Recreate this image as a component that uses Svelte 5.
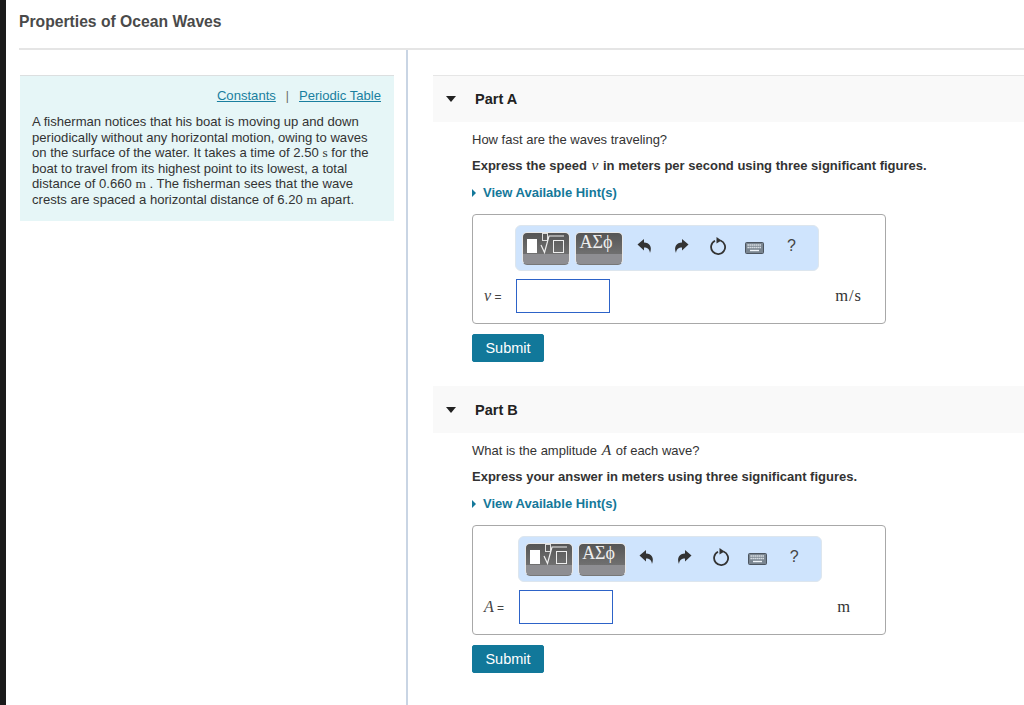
<script>
	const parts = [
		{
			name: 'Part A',
			question: ['How fast are the waves traveling?', '', ''],
			instruction: ['Express the speed ', 'v', ' in meters per second using three significant figures.'],
			label: 'v',
			unit: 'm/s',
			unitInset: 23
		},
		{
			name: 'Part B',
			question: ['What is the amplitude ', 'A', ' of each wave?'],
			instruction: ['Express your answer in meters using three significant figures.', '', ''],
			label: 'A',
			unit: 'm',
			unitInset: 34
		}
	];
</script>

{#snippet mathText(bits)}
	{bits[0]}{#if bits[1]}<i class="math">{bits[1]}</i>{/if}{bits[2]}
{/snippet}

<div class="page">
	<h1>Properties of Ocean Waves</h1>

	<div class="columns">
		<aside>
			<div class="intro">
				<div class="links">
					<a href="#constants">Constants</a>
					<span class="sep">|</span>
					<a href="#table">Periodic Table</a>
				</div>
				<p>
					A fisherman notices that his boat is moving up and down periodically without any
					horizontal motion, owing to waves on the surface of the water. It takes a time of 2.50
					<span class="unit">s</span> for the boat to travel from its highest point to its lowest,
					a total distance of 0.660 <span class="unit">m</span> . The fisherman sees that the wave
					crests are spaced a horizontal distance of 6.20 <span class="unit">m</span> apart.
				</p>
			</div>
		</aside>

		<main>
			{#each parts as part}
				<section>
					<header>
						<span class="caret"></span>
						<h2>{part.name}</h2>
					</header>
					<div class="content">
						<p class="question">{@render mathText(part.question)}</p>
						<p class="instruction">{@render mathText(part.instruction)}</p>
						<a class="hints" href="#hints"><span class="hint-caret"></span>View Available Hint(s)</a>

						<div class="answer">
							<div class="toolbar">
								<button class="tpl" aria-label="Templates">
									<svg width="46" height="31" viewBox="0 0 46 31">
										<rect x="4" y="6" width="10" height="14" fill="#fff" />
										<rect x="19.5" y="0.5" width="5" height="7" fill="none" stroke="#ddd" />
										<path d="M18 12 L21.5 19.5 L26 3 H41" fill="none" stroke="#eee" stroke-width="1.2" />
										<rect x="30.5" y="7.5" width="10" height="12" fill="none" stroke="#eee" />
									</svg>
								</button>
								<button class="tpl greek">ΑΣϕ</button>
								<div class="tools">
									<svg width="16" height="16" viewBox="0 0 16 16">
										<path d="M0.5 6.5 L7 1 V4.5 C12.5 4.5 15.5 9 13 15 C12.5 11 10.5 9.5 7 9.5 V12.5 Z" fill="#333" />
									</svg>
									<svg width="16" height="16" viewBox="0 0 16 16">
										<path d="M15.5 6.5 L9 1 V4.5 C3.5 4.5 0.5 9 3 15 C3.5 11 5.5 9.5 9 9.5 V12.5 Z" fill="#333" />
									</svg>
									<svg width="18" height="18" viewBox="0 0 18 18">
										<path d="M6 3.8 A7 7 0 1 0 11.5 3.5" fill="none" stroke="#333" stroke-width="1.8" />
										<path d="M7.5 0 L12.5 3.6 L7.5 6.5 Z" fill="#333" />
									</svg>
									<svg class="keys" width="19" height="12" viewBox="0 0 19 12">
										<rect x="0.5" y="0.5" width="18" height="11" rx="1" fill="#7a8590" stroke="#4c5560" />
										<path d="M2.5 3 H16.5 M2.5 5.5 H16.5" stroke="#eef3f8" stroke-width="1.5" stroke-dasharray="1.3 .7" />
										<path d="M5 8.5 H14" stroke="#eef3f8" stroke-width="1.4" />
									</svg>
									<span class="help">?</span>
								</div>
							</div>
							<label class="var" for={part.label}><i class="math">{part.label}</i> =</label>
							<input id={part.label} type="text" />
							<span class="answer-unit" style:padding-right="{part.unitInset}px">{part.unit}</span>
						</div>

						<button class="submit">Submit</button>
					</div>
				</section>
			{/each}
		</main>
	</div>
</div>

<style>
	:global(body) {
		margin: 0;
		background: #fff;
		font-family: 'Liberation Sans', Arial, sans-serif;
	}

	.page {
		height: 705px;
		box-sizing: border-box;
		overflow: hidden;
		border-left: 6px solid #1a1a1a;
		padding-left: 13px;
		display: flex;
		flex-direction: column;
		color: #333;
	}

	h1 {
		margin: 0;
		height: 50px;
		box-sizing: border-box;
		padding-top: 12px;
		border-bottom: 2px solid #e5e5e5;
		font-size: 15.7px;
		line-height: 19px;
		color: #4a4a4a;
	}

	.columns {
		flex: 1;
		display: flex;
	}

	aside {
		width: 389px;
		box-sizing: border-box;
		border-right: 2px solid #c9d5e4;
		padding: 25px 12px 0 1px;
	}

	.intro {
		background: #e6f6f7;
		border-top: 1px solid #dcdfe0;
		height: 146px;
		box-sizing: border-box;
		padding: 12px 13px 0 12px;
	}

	.links {
		display: flex;
		justify-content: flex-end;
		gap: 10px;
		font-size: 13.1px;
		line-height: 16px;
		margin-bottom: 10px;
	}

	.links a {
		color: #1a7f9f;
	}

	.sep {
		color: #666;
		font-size: 12px;
	}

	.intro p {
		margin: 0;
		font-size: 13.1px;
		line-height: 15.6px;
		color: #333;
	}

	.unit {
		font-family: 'Liberation Serif', serif;
		font-size: 13.5px;
		line-height: 1;
	}

	main {
		flex: 1;
		padding: 25px 0 0 25px;
	}

	section {
		height: 311px;
	}

	header {
		height: 47px;
		box-sizing: border-box;
		display: flex;
		align-items: center;
		background: #f9f9f9;
		border-top: 1px solid #e6e6e6;
	}

	section + section header {
		border-top-color: #f9f9f9;
	}

	.caret {
		width: 0;
		height: 0;
		margin-left: 13px;
		border-left: 5.5px solid transparent;
		border-right: 5.5px solid transparent;
		border-top: 6px solid #222;
	}

	h2 {
		margin: 0 0 0 19px;
		font-size: 14.5px;
		color: #222;
	}

	.content {
		padding: 9px 0 0 39px;
		font-size: 13px;
	}

	.question {
		margin: 0;
		line-height: 17px;
	}

	.instruction {
		margin: 9px 0 0;
		line-height: 17px;
		font-weight: bold;
	}

	.math {
		font-family: 'Liberation Serif', serif;
		font-style: italic;
		font-size: 15.5px;
		font-weight: normal;
		line-height: 1;
		padding: 0 1px;
	}

	.hints {
		display: flex;
		align-items: center;
		gap: 7px;
		margin-top: 11px;
		line-height: 16px;
		font-weight: bold;
		color: #14789a;
		text-decoration: none;
	}

	.hint-caret {
		width: 0;
		height: 0;
		border-top: 4px solid transparent;
		border-bottom: 4px solid transparent;
		border-left: 4px solid #14789a;
	}

	.answer {
		margin-top: 13px;
		width: 414px;
		height: 110px;
		box-sizing: border-box;
		border: 1px solid #a8a8a8;
		border-radius: 4px;
		padding: 10px 0 0 11px;
		display: grid;
		grid-template-columns: auto 1fr auto;
		grid-template-rows: 46px 34px;
		align-content: start;
		row-gap: 8px;
		align-items: center;
		column-gap: 15px;
	}

	.toolbar {
		grid-column: 2 / 4;
		width: 304px;
		height: 46px;
		box-sizing: border-box;
		margin-left: -1px;
		background: #cfe4fd;
		border: 1px solid #dde6ee;
		border-radius: 6px;
		display: flex;
		align-items: center;
		padding: 0 0 0 6px;
		gap: 5px;
	}

	.tpl {
		flex: none;
		width: 48px;
		height: 33px;
		box-sizing: border-box;
		padding: 0;
		border: 1px solid #e8e8e8;
		border-bottom-color: #777;
		border-radius: 5px;
		background: linear-gradient(#555 0, #707070 68%, #8e8e92 68%, #8e8e92 100%);
		display: block;
		line-height: 0;
		text-align: left;
	}

	.greek {
		color: #eee;
		font-family: 'Liberation Serif', serif;
		font-size: 18px;
		line-height: 18px;
		padding: 0 0 13px 3px;
		white-space: nowrap;
	}

	.tools {
		display: grid;
		grid-auto-flow: column;
		grid-auto-columns: 36.7px;
		justify-items: center;
		align-items: center;
		margin-left: -2px;
		margin-top: -5px;
	}

	.keys {
		margin-top: 5px;
	}

	.help {
		font-size: 16px;
		color: #444;
	}

	.var {
		font-size: 12px;
		color: #444;
		white-space: nowrap;
	}

	.var .math {
		font-size: 16px;
		padding: 0;
	}

	input {
		width: 94px;
		height: 34px;
		box-sizing: border-box;
		border: 1px solid #2d63c8;
		background: #fff;
		outline: none;
		padding: 0;
	}

	.answer-unit {
		font-family: 'Liberation Serif', serif;
		font-size: 16.5px;
		letter-spacing: 1px;
		color: #333;
	}

	.submit {
		display: block;
		margin-top: 10px;
		width: 72px;
		height: 28px;
		box-sizing: border-box;
		border: 1px solid #11789a;
		border-radius: 2px;
		background: #11789a;
		color: #fff;
		font-family: inherit;
		font-size: 14.5px;
		padding: 0;
	}
</style>
